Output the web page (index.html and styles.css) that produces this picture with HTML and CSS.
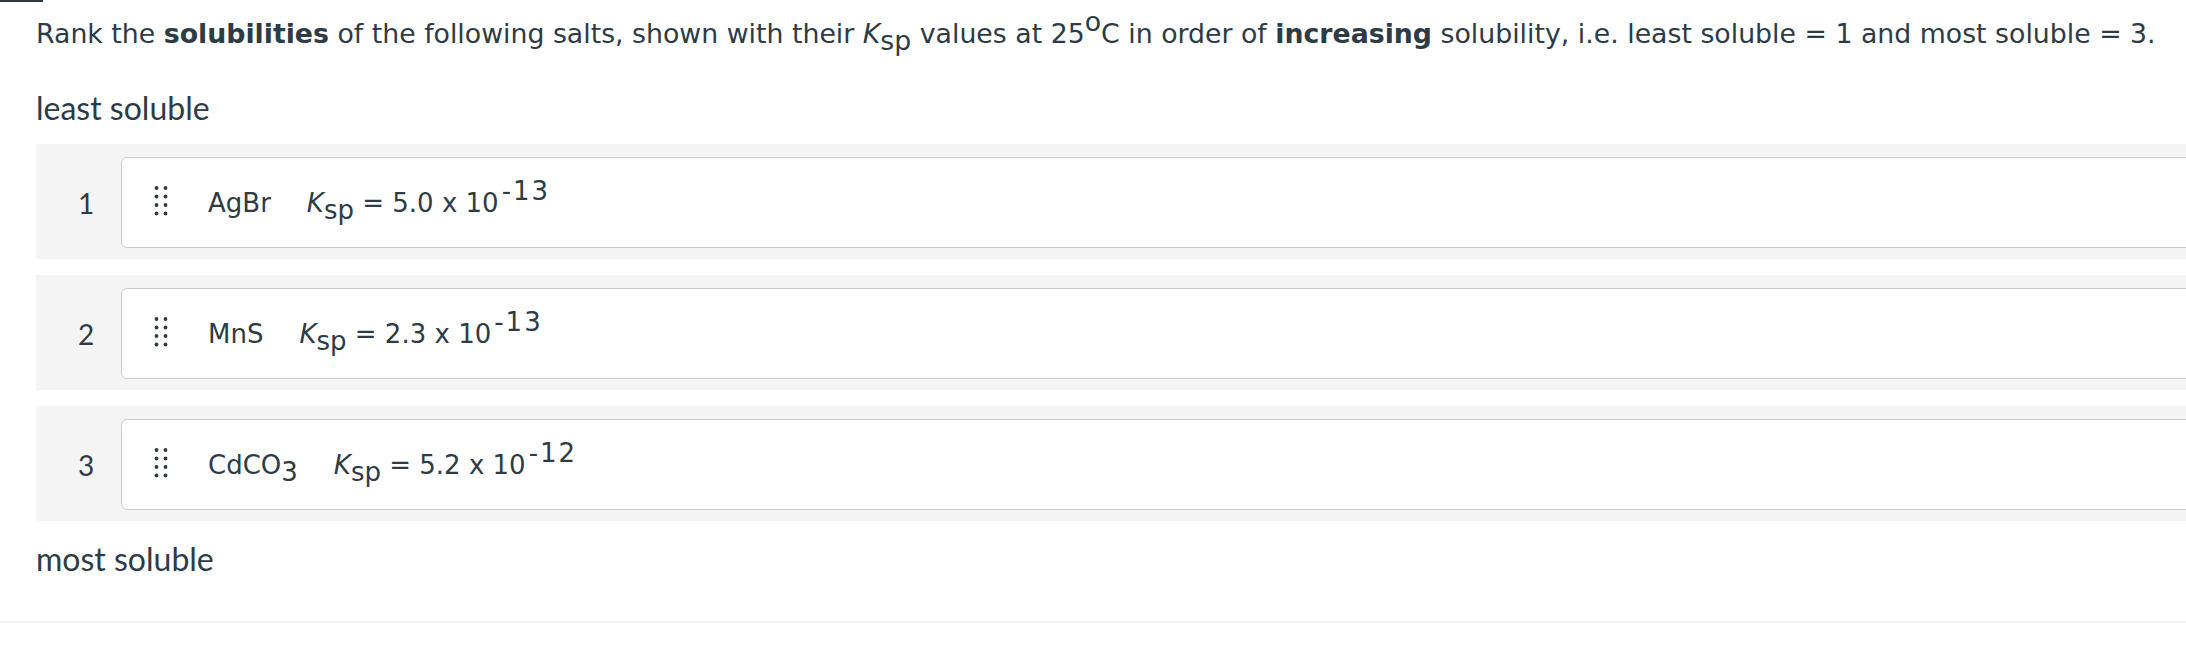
FILE: index.html
```html
<!DOCTYPE html>
<html>
<head>
<meta charset="utf-8">
<link rel="stylesheet" href="styles.css">
</head>
<body>
<div class="top-bar"></div>
<div class="question">
  <p class="prompt">Rank the <strong>solubilities</strong> of the following salts, shown with their <i>K</i><sub>sp</sub> values at 25<sup>o</sup>C in order of <strong>increasing</strong> solubility, i.e. least soluble = 1 and most soluble = 3.</p>
  <div class="label">least soluble</div>
  <div class="rank-list">
    <div class="band">
      <div class="num">1</div>
      <div class="item">
        <svg class="handle" width="14" height="32" viewBox="0 0 14 32"><g fill="#2d3b45"><circle cx="2.5" cy="3" r="1.9"/><circle cx="11.5" cy="3" r="1.9"/><circle cx="2.5" cy="11.5" r="1.9"/><circle cx="11.5" cy="11.5" r="1.9"/><circle cx="2.5" cy="20" r="1.9"/><circle cx="11.5" cy="20" r="1.9"/><circle cx="2.5" cy="28.5" r="1.9"/><circle cx="11.5" cy="28.5" r="1.9"/></g></svg>
        <span class="text"><span class="salt">AgBr</span><i>K</i><sub>sp</sub> = 5.0 x 10<sup>-13</sup></span>
      </div>
    </div>
    <div class="band">
      <div class="num">2</div>
      <div class="item">
        <svg class="handle" width="14" height="32" viewBox="0 0 14 32"><g fill="#2d3b45"><circle cx="2.5" cy="3" r="1.9"/><circle cx="11.5" cy="3" r="1.9"/><circle cx="2.5" cy="11.5" r="1.9"/><circle cx="11.5" cy="11.5" r="1.9"/><circle cx="2.5" cy="20" r="1.9"/><circle cx="11.5" cy="20" r="1.9"/><circle cx="2.5" cy="28.5" r="1.9"/><circle cx="11.5" cy="28.5" r="1.9"/></g></svg>
        <span class="text"><span class="salt">MnS</span><i>K</i><sub>sp</sub> = 2.3 x 10<sup>-13</sup></span>
      </div>
    </div>
    <div class="band">
      <div class="num">3</div>
      <div class="item">
        <svg class="handle" width="14" height="32" viewBox="0 0 14 32"><g fill="#2d3b45"><circle cx="2.5" cy="3" r="1.9"/><circle cx="11.5" cy="3" r="1.9"/><circle cx="2.5" cy="11.5" r="1.9"/><circle cx="11.5" cy="11.5" r="1.9"/><circle cx="2.5" cy="20" r="1.9"/><circle cx="11.5" cy="20" r="1.9"/><circle cx="2.5" cy="28.5" r="1.9"/><circle cx="11.5" cy="28.5" r="1.9"/></g></svg>
        <span class="text"><span class="salt">CdCO<sub>3</sub></span><i>K</i><sub>sp</sub> = 5.2 x 10<sup>-12</sup></span>
      </div>
    </div>
  </div>
  <div class="label bottom-label">most soluble</div>
</div>
<div class="divider"></div>
</body>
</html>
```

FILE: styles.css
```css
html, body {
  margin: 0;
  padding: 0;
  background: #ffffff;
  overflow: hidden;
}
body {
  color: #2d3b45;
  width: 2186px;
}
.top-bar {
  width: 43px;
  height: 2px;
  background: #2d3b45;
}
.question {
  padding-left: 36px;
  width: 2300px;
}
.prompt {
  margin: 12px 0 0;
  font-family: "DejaVu Sans", Verdana, sans-serif;
  font-size: 26.75px;
  line-height: 40px;
  white-space: nowrap;
}
.prompt strong {
  font-weight: bold;
}
sub, sup {
  line-height: 0;
  font-size: 100%;
}
sub {
  vertical-align: -0.28em;
}
sup {
  vertical-align: 0.45em;
}
.label {
  font-family: Lato, "Liberation Sans", sans-serif;
  font-size: 32px;
  line-height: 34px;
  margin-top: 37px;
}
.rank-list {
  margin-top: 19px;
  display: flex;
  flex-direction: column;
  gap: 16px;
}
.band {
  background: #f4f4f4;
  display: flex;
  align-items: center;
  height: 115px;
  padding: 13px 0 11px;
  box-sizing: border-box;
}
.num {
  width: 85px;
  box-sizing: border-box;
  padding-left: 42px;
  font-family: Lato, "Liberation Sans", sans-serif;
  font-size: 28px;
}
.item {
  flex: 1;
  height: 91px;
  box-sizing: border-box;
  background: #ffffff;
  border: 1px solid #c7cdd1;
  border-radius: 6px;
  display: flex;
  align-items: center;
  padding-left: 32px;
}
.handle {
  flex: none;
  margin-top: -4px;
}
.text {
  margin-left: 40px;
  font-family: "DejaVu Sans", Verdana, sans-serif;
  font-size: 26px;
  white-space: nowrap;
}
.text sup {
  letter-spacing: 2px;
  padding-left: 3px;
}
.salt {
  margin-right: 36px;
}
.bottom-label {
  margin-top: 21px;
}
.divider {
  margin-top: 45px;
  height: 2px;
  background: #f2f2f2;
}
```
